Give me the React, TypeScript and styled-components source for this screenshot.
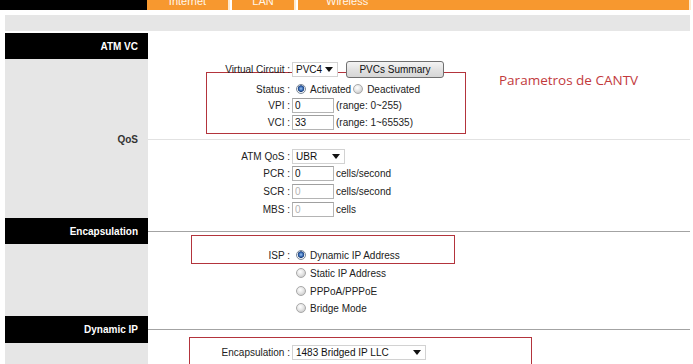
import React from "react";
import styled, { createGlobalStyle } from "styled-components";

const GlobalStyle = createGlobalStyle`
  html, body {
    margin: 0;
    padding: 0;
    background: #fff;
  }
  body {
    font-family: "Liberation Sans", Arial, sans-serif;
    font-size: 10px;
    color: #222;
    overflow: hidden;
  }
`;

const Page = styled.div`
  position: relative;
  width: 693px;
  height: 364px;
  overflow: hidden;
`;

/* ---------- top navigation (scrolled, only the bottom of it is visible) ---------- */

const TopNav = styled.nav`
  display: flex;
  height: 10px;
`;

const NavBrand = styled.div`
  width: 147px;
  flex: none;
  background: #000;
`;

const Tab = styled.div<{ $w: number; $left?: boolean; $first?: boolean }>`
  width: ${(p) => p.$w}px;
  flex: none;
  margin-left: ${(p) => (p.$first ? 0 : 4)}px;
  background: #f7982f;
  box-shadow: 2px 0 0 #fde9cf;
  color: #fff6ea;
  font-size: 11px;
  overflow: hidden;
  display: flex;
  justify-content: ${(p) => (p.$left ? "flex-start" : "center")};
  padding-left: ${(p) => (p.$left ? 28 : 0)}px;
  box-sizing: border-box;
`;

const TabText = styled.span`
  display: block;
  line-height: 12px;
  margin-top: -5px;
`;

const GrayBar = styled.div`
  height: 16px;
  margin: 5px 3px 2px 5px;
  background: #e6e6e6;
`;

/* ---------- sections ---------- */

const Band = styled.div`
  position: relative;
  display: flex;
  margin: 0 3px 0 5px;
`;

const SideHead = styled.div<{ $dark?: boolean; $h: number }>`
  width: 143px;
  height: ${(p) => p.$h}px;
  flex: none;
  box-sizing: border-box;
  padding-right: 10px;
  display: flex;
  align-items: center;
  justify-content: flex-end;
  background: ${(p) => (p.$dark ? "#000" : "#e6e6e6")};
  color: ${(p) => (p.$dark ? "#fff" : "#333")};
  font-weight: bold;
  font-size: 10px;
`;

const Rule = styled.div<{ $tone: "dark" | "light" | "none" }>`
  flex: 1;
  align-self: center;
  height: 1px;
  background: ${(p) =>
    p.$tone === "dark" ? "#a3a3a3" : p.$tone === "light" ? "#e2e2e2" : "transparent"};
`;

const Side = styled.div`
  width: 143px;
  flex: none;
  background: #e6e6e6;
`;

const Body = styled.div<{ $h?: number }>`
  flex: 1;
  display: flex;
  flex-direction: column;
  ${(p) => (p.$h ? `height: ${p.$h}px;` : "")}
`;

const Row = styled.div<{ $h: number; $mt?: number }>`
  display: grid;
  grid-template-columns: 142px auto;
  column-gap: 2px;
  align-items: center;
  height: ${(p) => p.$h}px;
  margin-top: ${(p) => p.$mt ?? 0}px;
  flex: none;
`;

const Label = styled.div`
  text-align: right;
  white-space: nowrap;
`;

const Field = styled.div`
  display: flex;
  align-items: center;
  white-space: nowrap;
`;

/* ---------- form controls ---------- */

const SelectBox = styled.div<{ $w: number }>`
  width: ${(p) => p.$w}px;
  height: 15px;
  box-sizing: border-box;
  border: 1px solid #d2d2d2;
  background: #fff;
  display: flex;
  align-items: center;
  justify-content: space-between;
  padding: 0 4px 0 3px;
  font-size: 10px;
  color: #111;
`;

const Arrow = () => (
  <svg width="8" height="5" viewBox="0 0 8 5">
    <path d="M0 0 L8 0 L4 5 Z" fill="#111" />
  </svg>
);

const Select = ({ value, width }: { value: string; width: number }) => (
  <SelectBox $w={width}>
    <span>{value}</span>
    <Arrow />
  </SelectBox>
);

const TextInput = styled.input`
  width: 42px;
  height: 15px;
  box-sizing: border-box;
  margin: 0;
  padding: 0 2px;
  border: 1px solid #b4b4b4;
  border-top-color: #a0a0a0;
  font-family: "Liberation Sans", Arial, sans-serif;
  font-size: 10px;
  color: #111;
  background: #fff;
  outline: none;
  &:disabled {
    color: #b3b3b3;
  }
`;

const Hint = styled.span`
  margin-left: 2px;
`;

const Button = styled.button`
  margin-left: 8px;
  width: 98px;
  height: 17px;
  box-sizing: border-box;
  padding: 0;
  border: 1px solid #707070;
  border-radius: 3px;
  background: linear-gradient(#f4f4f4, #e2e2e2 50%, #d6d6d6);
  font-family: "Liberation Sans", Arial, sans-serif;
  font-size: 10px;
  color: #111;
`;

const RadioDot = styled.span<{ $on?: boolean; $first?: boolean }>`
  width: 10px;
  height: 10px;
  flex: none;
  box-sizing: border-box;
  border-radius: 50%;
  border: 1px solid ${(p) => (p.$on ? "#7d8a99" : "#a8a8a8")};
  margin-left: ${(p) => (p.$first ? 4 : 2)}px;
  margin-right: 4px;
  background: ${(p) =>
    p.$on
      ? "radial-gradient(circle at 50% 45%, #9cc4f2 0, #2f62ad 2.2px, #1c3f7a 3px, #f4f6f8 3.6px, #d8dde3 100%)"
      : "radial-gradient(circle at 40% 35%, #ffffff 0, #e6e6e6 45%, #bdbdbd 100%)"};
`;

const Radio = ({ label, on, first }: { label: string; on?: boolean; first?: boolean }) => (
  <>
    <RadioDot $on={on} $first={first} />
    <span>{label}</span>
  </>
);

/* ---------- annotations drawn over the page ---------- */

const Mark = styled.div<{ $x: number; $y: number; $w: number; $h: number }>`
  position: absolute;
  left: ${(p) => p.$x}px;
  top: ${(p) => p.$y}px;
  width: ${(p) => p.$w}px;
  height: ${(p) => p.$h}px;
  border: 1px solid #b3343c;
  box-sizing: border-box;
`;

const Note = styled.div`
  position: absolute;
  left: 499px;
  top: 71px;
  font-family: "Open Sans", "Noto Sans", sans-serif;
  font-size: 13.5px;
  color: #c23a3c;
`;

export default function App() {
  return (
    <>
      <GlobalStyle />
      <Page>
        <Mark $x={206} $y={72} $w={260} $h={62} />
        <Mark $x={191} $y={235} $w={264} $h={29} />
        <Mark $x={189} $y={337} $w={343} $h={40} />
        <Note>Parametros de CANTV</Note>

        <TopNav>
          <NavBrand />
          <Tab $w={81} $first>
            <TabText>Internet</TabText>
          </Tab>
          <Tab $w={62}>
            <TabText>LAN</TabText>
          </Tab>
          <Tab $w={391} $left>
            <TabText>Wireless</TabText>
          </Tab>
        </TopNav>
        <GrayBar />

        <Band>
          <SideHead $dark $h={26}>ATM VC</SideHead>
          <Rule $tone="none" />
        </Band>
        <Band>
          <Side />
          <Body>
            <Row $h={16} $mt={2}>
              <Label>Virtual Circuit :</Label>
              <Field>
                <Select value="PVC4" width={46} />
                <Button>PVCs Summary</Button>
              </Field>
            </Row>
            <Row $h={16} $mt={4}>
              <Label>Status :</Label>
              <Field>
                <Radio label="Activated" on first />
                <Radio label="Deactivated" />
              </Field>
            </Row>
            <Row $h={17}>
              <Label>VPI :</Label>
              <Field>
                <TextInput defaultValue="0" readOnly />
                <Hint>(range: 0~255)</Hint>
              </Field>
            </Row>
            <Row $h={17}>
              <Label>VCI :</Label>
              <Field>
                <TextInput defaultValue="33" readOnly />
                <Hint>(range: 1~65535)</Hint>
              </Field>
            </Row>
          </Body>
        </Band>

        <Band>
          <SideHead $h={16}>QoS</SideHead>
          <Rule $tone="light" />
        </Band>
        <Band>
          <Side />
          <Body>
            <Row $h={17} $mt={1}>
              <Label>ATM QoS :</Label>
              <Field>
                <Select value="UBR" width={53} />
              </Field>
            </Row>
            <Row $h={17}>
              <Label>PCR :</Label>
              <Field>
                <TextInput defaultValue="0" readOnly />
                <Hint>cells/second</Hint>
              </Field>
            </Row>
            <Row $h={18}>
              <Label>SCR :</Label>
              <Field>
                <TextInput defaultValue="0" disabled />
                <Hint>cells/second</Hint>
              </Field>
            </Row>
            <Row $h={18}>
              <Label>MBS :</Label>
              <Field>
                <TextInput defaultValue="0" disabled />
                <Hint>cells</Hint>
              </Field>
            </Row>
          </Body>
        </Band>

        <Band>
          <SideHead $dark $h={26}>Encapsulation</SideHead>
          <Rule $tone="dark" />
        </Band>
        <Band>
          <Side />
          <Body $h={72}>
            <Row $h={18} $mt={2}>
              <Label>ISP :</Label>
              <Field>
                <Radio label="Dynamic IP Address" on first />
              </Field>
            </Row>
            <Row $h={18}>
              <Label />
              <Field>
                <Radio label="Static IP Address" first />
              </Field>
            </Row>
            <Row $h={18}>
              <Label />
              <Field>
                <Radio label="PPPoA/PPPoE" first />
              </Field>
            </Row>
            <Row $h={16}>
              <Label />
              <Field>
                <Radio label="Bridge Mode" first />
              </Field>
            </Row>
          </Body>
        </Band>

        <Band>
          <SideHead $dark $h={27}>Dynamic IP</SideHead>
          <Rule $tone="dark" />
        </Band>
        <Band>
          <Side />
          <Body $h={40}>
            <Row $h={16} $mt={1}>
              <Label>Encapsulation :</Label>
              <Field>
                <Select value="1483 Bridged IP LLC" width={134} />
              </Field>
            </Row>
          </Body>
        </Band>
      </Page>
    </>
  );
}
